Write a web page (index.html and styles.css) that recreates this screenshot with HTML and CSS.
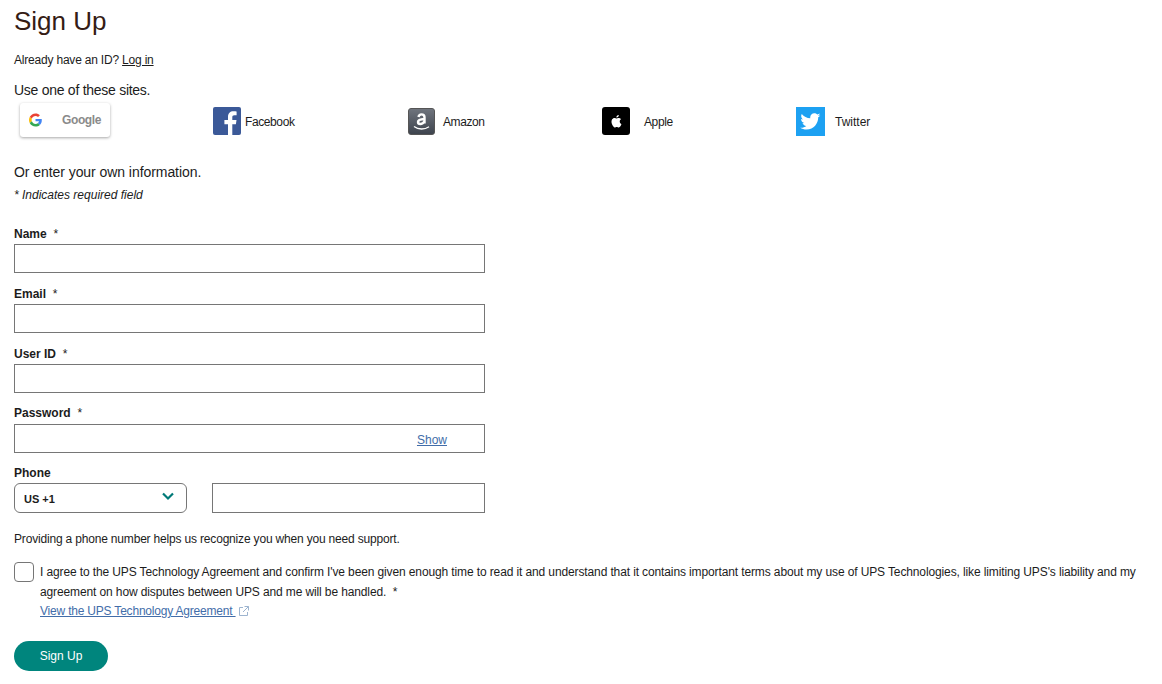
FILE: index.html
```html
<!DOCTYPE html>
<html lang="en">
<head>
    <meta charset="UTF-8">
    <meta name="viewport" content="width=device-width, initial-scale=1.0">
    <title>Sign Up</title>
    <link rel="stylesheet" href="styles.css">
</head>
<body>
    <h1>Sign Up</h1>
    <p class="login-line">Already have an ID? <a href="#">Log in</a></p>
    <p class="lead">Use one of these sites.</p>

    <div class="social-row">
        <a class="social google" href="#">
            <svg class="g-logo" viewBox="0 0 48 48" width="16" height="16">
                <path fill="#EA4335" d="M24 9.500c3.500 0 6.700 1.200 9.200 3.600l6.900-6.900C35.900 2.400 30.400 0 24 0 14.600 0 6.500 5.400 2.600 13.200l8 6.200C12.500 13.600 17.800 9.500 24 9.500z"/>
                <path fill="#4285F4" d="M47 24.500c0-1.600-.1-3.100-.4-4.500H24v9h13c-.6 3-2.300 5.500-4.800 7.200l7.700 6c4.500-4.200 7.100-10.300 7.100-17.700z"/>
                <path fill="#FBBC05" d="M10.600 28.600C10.100 27.100 9.800 25.600 9.800 24s.3-3.100.8-4.600l-8-6.200C.9 16.500 0 20.100 0 24s.9 7.500 2.600 10.800l8-6.200z"/>
                <path fill="#34A853" d="M24 48c6.500 0 11.900-2.100 15.900-5.800l-7.700-6c-2.200 1.400-4.900 2.300-8.200 2.300-6.200 0-11.500-4.100-13.400-9.900l-8 6.200C6.500 42.600 14.600 48 24 48z"/>
            </svg>
            <span>Google</span>
        </a>
        <a class="social" href="#">
            <svg class="icon icon-fb" viewBox="0 0 28 28" width="28" height="28">
                <rect width="28" height="28" rx="2" fill="#3b5998"/>
                <path fill="#fff" d="M19.300 28V17.200h3.600l.6-4.200h-4.200v-2.700c0-1.200.4-2 2.100-2h2.200V4.500c-.4 0-1.700-.2-3.200-.2-3.200 0-5.400 2-5.400 5.600V13h-3.600v4.200H15V28z"/>
            </svg>
            <span>Facebook</span>
        </a>
        <a class="social social-amazon" href="#">
            <svg class="icon" viewBox="0 0 27 27" width="27" height="27">
                <defs>
                    <linearGradient id="amz" x1="0" y1="0" x2="0" y2="1">
                        <stop offset="0" stop-color="#70757e"/>
                        <stop offset="1" stop-color="#3d434d"/>
                    </linearGradient>
                </defs>
                <rect x=".5" y=".5" width="26" height="26" rx="2.500" fill="url(#amz)" stroke="#555"/>
                <path fill="none" stroke="#fff" stroke-width="2.400" d="M10.500 9c.3-1.700 1.500-2.600 3-2.600 1.800 0 3 1 3 2.800v6.300M16.500 11c-3.500.2-6.500.7-6.500 3 0 1.300 1 2 2.300 2 1.800 0 3.400-1.200 4.200-2.800"/>
                <path fill="none" stroke="#fff" stroke-width="1.300" d="M6 18.500c4.500 3.300 10.500 3.300 15 .2"/>
            </svg>
            <span>Amazon</span>
        </a>
        <a class="social social-apple" href="#">
            <svg class="icon" viewBox="0 0 28 28" width="28" height="28">
                <rect width="28" height="28" rx="3" fill="#000"/>
                <path fill="#fff" d="M17.700 14.500c0-1.500 1.200-2.200 1.300-2.300-.7-1-1.800-1.200-2.200-1.200-.9-.1-1.800.6-2.300.6s-1.200-.6-2-.5c-1 0-2 .6-2.500 1.500-1.100 1.900-.3 4.700.8 6.200.5.800 1.100 1.600 1.900 1.600s1.100-.5 2-.5 1.200.5 2 .5 1.400-.8 1.900-1.500c.6-.9.800-1.700.9-1.800-.1 0-1.800-.7-1.800-2.600zM16.200 9.800c.4-.5.700-1.200.6-1.900-.6 0-1.300.4-1.800.9-.4.500-.7 1.200-.6 1.800.7.100 1.400-.3 1.800-.8z"/>
            </svg>
            <span>Apple</span>
        </a>
        <a class="social social-twitter" href="#">
            <svg class="icon" viewBox="0 0 29 29" width="29" height="29">
                <rect width="29" height="29" fill="#1da1f2"/>
                <path fill="#fff" d="M24.500 8.200c-.8.300-1.600.6-2.400.7.900-.5 1.500-1.300 1.800-2.300-.8.500-1.700.8-2.600 1-.8-.8-1.900-1.300-3-1.300-2.300 0-4.100 1.900-4.100 4.100 0 .3 0 .6.100.9-3.400-.2-6.500-1.800-8.500-4.300-.4.600-.6 1.300-.6 2.100 0 1.400.7 2.700 1.800 3.400-.7 0-1.300-.2-1.900-.5v.1c0 2 1.400 3.700 3.300 4-.3.100-.7.100-1.100.1-.3 0-.5 0-.8-.1.500 1.600 2 2.800 3.800 2.900-1.400 1.100-3.200 1.800-5.100 1.800-.3 0-.7 0-1-.1 1.800 1.200 4 1.800 6.300 1.800 7.500 0 11.700-6.300 11.700-11.700v-.5c.8-.6 1.500-1.300 2.300-2.100z"/>
            </svg>
            <span>Twitter</span>
        </a>
    </div>

    <p class="lead lead-own">Or enter your own information.</p>
    <p class="required-note">* Indicates required field</p>

    <form class="signup-form">
        <div class="field">
            <label for="name">Name <i>*</i></label>
            <input type="text" id="name">
        </div>
        <div class="field">
            <label for="email">Email <i>*</i></label>
            <input type="text" id="email">
        </div>
        <div class="field">
            <label for="userid">User ID <i>*</i></label>
            <input type="text" id="userid">
        </div>
        <div class="field">
            <label class="label-tight" for="password">Password <i>*</i></label>
            <div class="password-box">
                <input type="text" id="password">
                <a class="show-link" href="#">Show</a>
            </div>
        </div>
        <div class="field">
            <label class="label-tight" for="phone">Phone</label>
            <div class="phone-row">
                <div class="country-select">
                    <span>US +1</span>
                    <svg viewBox="0 0 14 9" width="14" height="9">
                        <path fill="none" stroke="#007a78" stroke-width="2.200" d="M2 1.500l5 5 5-5"/>
                    </svg>
                </div>
                <input type="text" id="phone">
            </div>
        </div>
    </form>

    <p class="phone-help">Providing a phone number helps us recognize you when you need support.</p>

    <div class="agree">
        <span class="checkbox"></span>
        <div class="agree-text">
            I agree to the UPS Technology Agreement and confirm I've been given enough time to read it and understand that it contains important terms about my use of UPS Technologies, like limiting UPS's liability and my agreement on how disputes between UPS and me will be handled. &nbsp;*<br>
            <a href="#">View the UPS Technology Agreement&nbsp;</a>
            <svg class="ext-icon" viewBox="0 0 10 10" width="10" height="10">
                <path fill="none" stroke="#9db4cf" d="M4 1.500H.5v8h8V6M5.500.5h4v4M9.500.5L4 6"/>
            </svg>
        </div>
    </div>

    <button type="button" class="signup-btn">Sign Up</button>
</body>
</html>
```

FILE: styles.css
```css
body {
    margin: 0;
    padding: 0 14px;
    background-color: #fff;
    font-family: "Liberation Sans", Arial, sans-serif;
    font-size: 12px;
    color: #1c1c1c;
}

h1 {
    margin: 0;
    padding-top: 4px;
    font-size: 26px;
    font-weight: 400;
    line-height: 34px;
    color: #351c15;
}

p {
    margin: 0;
}

a {
    color: #1c1c1c;
}

.login-line {
    margin-top: 13px;
    line-height: 18px;
    letter-spacing: -0.2px;
}

.lead {
    font-size: 14px;
    line-height: 20px;
    letter-spacing: -0.27px;
}

.login-line + .lead {
    margin-top: 11px;
}

.social-row {
    display: grid;
    grid-template-columns: repeat(5, 194px);
    height: 36px;
    margin-top: 3px;
}

.social {
    display: flex;
    align-items: center;
    letter-spacing: -0.4px;
    text-decoration: none;
}

.social span {
    padding-top: 2px;
}

.social .icon {
    margin-right: 4px;
    margin-left: 5px;
}

.social-amazon .icon {
    margin-left: 6px;
    margin-right: 8px;
}

.social-apple .icon {
    margin-left: 6px;
    margin-right: 14px;
}

.social-twitter {
    letter-spacing: 0;
}

.social-twitter .icon {
    margin-left: 6px;
    margin-right: 10px;
}

.google {
    box-sizing: border-box;
    width: 90px;
    height: 34px;
    margin-left: 6px;
    padding: 0 9px;
    gap: 20px;
    background-color: #fff;
    border-radius: 3px;
    box-shadow: 0 1px 3px rgba(0, 0, 0, 0.35);
    font-weight: 700;
    color: #8a8a8a;
}

.google span {
    padding-top: 0;
}

.lead-own {
    margin-top: 23px;
    letter-spacing: -0.06px;
}

.required-note {
    margin-top: 4px;
    font-style: italic;
    line-height: 18px;
}

.signup-form {
    width: 471px;
    margin-top: 20px;
}

.field {
    margin-bottom: 11px;
}

.field label {
    display: block;
    height: 20px;
    line-height: 20px;
    font-weight: 700;
}

.field .label-tight {
    line-height: 18px;
}

.field label i {
    margin-left: 3px;
    font-weight: 400;
}

input[type="text"] {
    box-sizing: border-box;
    display: block;
    width: 100%;
    height: 29px;
    margin: 0;
    padding: 0 8px;
    background-color: #fff;
    border: 1px solid #767676;
    border-radius: 0;
}

.password-box {
    position: relative;
}

.show-link {
    position: absolute;
    top: 7px;
    right: 38px;
    color: #426da9;
    line-height: 18px;
}

.phone-row {
    display: flex;
    gap: 25px;
    margin-top: -1px;
}

.phone-row input[type="text"] {
    flex: 1;
    height: 30px;
}

.country-select {
    box-sizing: border-box;
    display: flex;
    align-items: center;
    justify-content: space-between;
    width: 173px;
    height: 30px;
    padding: 2px 11px 0 9px;
    border: 1px solid #767676;
    border-radius: 6px;
    font-size: 11px;
    font-weight: 700;
}

.country-select svg {
    margin-bottom: 6px;
}

.phone-help {
    margin-top: 17px;
    line-height: 18px;
    letter-spacing: -0.18px;
}

.agree {
    display: flex;
    gap: 6px;
    margin-top: 15px;
}

.checkbox {
    flex: none;
    box-sizing: border-box;
    width: 20px;
    height: 20px;
    margin-top: -1px;
    margin-left: 0;
    border: 1px solid #767676;
    border-radius: 4px;
}

.agree-text {
    line-height: 19.5px;
    letter-spacing: -0.12px;
}

.agree-text a {
    color: #426da9;
    letter-spacing: -0.2px;
}

.ext-icon {
    margin-left: 0;
    vertical-align: -1px;
}

.signup-btn {
    display: block;
    width: 94px;
    height: 30px;
    margin-top: 19px;
    padding: 1px 0 0;
    background-color: #00857d;
    border: none;
    border-radius: 15px;
    font-family: inherit;
    font-size: 12px;
    color: #fff;
    cursor: pointer;
}
```
